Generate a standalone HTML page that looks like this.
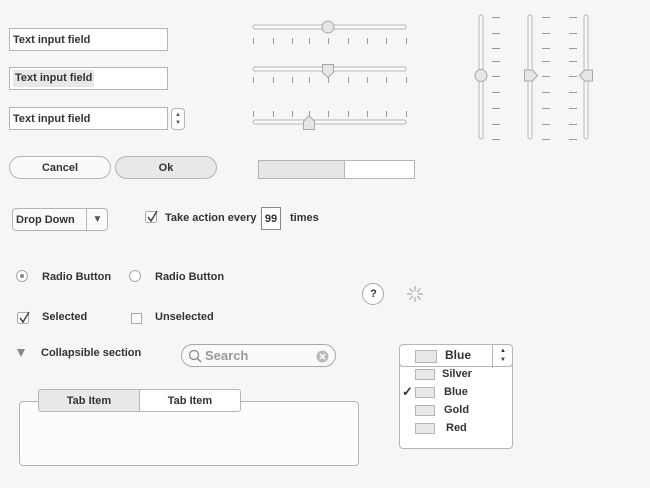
<!DOCTYPE html>
<html><head><style>
body{margin:0;width:650px;height:488px;background:#f6f6f6;font-family:"Liberation Sans",sans-serif;font-size:11px;font-weight:bold;color:#333;position:relative;overflow:hidden}
.a{position:absolute;box-sizing:border-box}
.inp{border:1px solid #b5b5b5;background:#fff;height:23px;line-height:21px;padding-left:3px;padding-top:1px}
.t{position:absolute;line-height:14px;white-space:nowrap}
.p1{padding-top:1px}
</style></head><body>
<div class="a inp" style="left:9px;top:28px;width:159px">Text input field</div>
<div class="a" style="left:9px;top:67px;width:159px;height:23px;border:1px solid #b5b5b5;background:#fff;padding:2px 0 0 3px"><span style="background:#e8e8e8;padding:0 2px;display:inline-block;line-height:17px">Text input field</span></div>
<div class="a inp" style="left:9px;top:107px;width:159px">Text input field</div>
<div class="a" style="left:171px;top:108px;width:14px;height:22px;border:1px solid #b5b5b5;border-radius:4px;background:#fff;font-size:6px;text-align:center;line-height:8px;padding-top:2px;color:#555">▲<br>▼</div>
<div class="a p1" style="left:9px;top:156px;width:102px;height:23px;border:1px solid #b5b5b5;border-radius:12px;background:#fafafa;text-align:center;line-height:21px">Cancel</div>
<div class="a p1" style="left:115px;top:156px;width:102px;height:23px;border:1px solid #b5b5b5;border-radius:12px;background:#e8e8e8;text-align:center;line-height:21px">Ok</div>

<svg class="a" style="left:0;top:0" width="650" height="488">
<g fill="#fafafa" stroke="#b5b5b5" stroke-width="1">
<rect x="253" y="25" width="153" height="4" rx="2"/>
<rect x="253" y="67" width="153" height="4" rx="2"/>
<rect x="253" y="120" width="153" height="4" rx="2"/>
<rect x="479" y="15" width="4" height="124" rx="2"/>
<rect x="528" y="15" width="4" height="124" rx="2"/>
<rect x="584" y="15" width="4" height="124" rx="2"/>
</g>
<g stroke="#999" stroke-width="1">
<path d="M253.5 38v6M273.5 38v6M292.5 38v6M309.5 38v6M328.5 38v6M348.5 38v6M367.5 38v6M386.5 38v6M406.5 38v6"/>
<path d="M253.5 77v6M273.5 77v6M292.5 77v6M309.5 77v6M328.5 77v6M348.5 77v6M367.5 77v6M386.5 77v6M406.5 77v6"/>
<path d="M253.5 111v6M273.5 111v6M292.5 111v6M309.5 111v6M328.5 111v6M348.5 111v6M367.5 111v6M386.5 111v6M406.5 111v6"/>
<path d="M492 17.5h8M492 33.5h8M492 48.5h8M492 61.5h8M492 76.5h8M492 92.5h8M492 108.5h8M492 124.5h8M492 139.5h8"/>
<path d="M542 17.5h8M542 33.5h8M542 48.5h8M542 61.5h8M542 76.5h8M542 92.5h8M542 108.5h8M542 124.5h8M542 139.5h8"/>
<path d="M569 17.5h8M569 33.5h8M569 48.5h8M569 61.5h8M569 76.5h8M569 92.5h8M569 108.5h8M569 124.5h8M569 139.5h8"/>
</g>
<g fill="#e6e6e6" stroke="#a8a8a8" stroke-width="1">
<circle cx="328" cy="27" r="6"/>
<path d="M322.5 64.5h11v8l-5.5 5l-5.5-5z"/>
<path d="M303.5 129.5h11v-8l-5.5-6l-5.5 6z"/>
<circle cx="481" cy="75.5" r="6"/>
<path d="M524.5 70h8l5 5.5l-5 5.5h-8z"/>
<path d="M592.5 70h-8l-5 5.5l5 5.5h8z"/>
</g>
<rect x="258.5" y="160.5" width="156" height="18" fill="#fff" stroke="#b5b5b5"/>
<rect x="259" y="161" width="85" height="17" fill="#e6e6e6"/>
<line x1="344.5" y1="161" x2="344.5" y2="178" stroke="#b5b5b5"/>
<circle cx="373" cy="294" r="10.5" fill="#fff" stroke="#a8a8a8"/>
<g stroke="#999" stroke-width="1.2" transform="translate(415 294)">
<path d="M0-3v-5M2.1-2.1l3.5-3.5M3 0h5M2.1 2.1l3.5 3.5M0 3v5M-2.1 2.1l-3.5 3.5M-3 0h-5M-2.1-2.1l-3.5-3.5" opacity=".8"/>
</g>
<circle cx="22" cy="276" r="5.5" fill="#fff" stroke="#a8a8a8"/><circle cx="22" cy="276" r="2" fill="#888"/>
<circle cx="135" cy="276" r="5.5" fill="#fff" stroke="#a8a8a8"/>
<rect x="17.5" y="312.5" width="11" height="11" rx="2" fill="#fff" stroke="#a8a8a8"/>
<path d="M20 318l3 4l6-10" fill="none" stroke="#444" stroke-width="1.5"/>
<rect x="131.5" y="313.5" width="10" height="10" fill="#fff" stroke="#a8a8a8"/>
<rect x="145.5" y="211.5" width="11" height="11" rx="2" fill="#fff" stroke="#a8a8a8"/>
<path d="M148 217l3 4l6-10" fill="none" stroke="#444" stroke-width="1.5"/>
<path d="M17 349h8l-4 8z" fill="#888"/>
</svg>

<div class="a p1" style="left:12px;top:208px;width:96px;height:23px;border:1px solid #b5b5b5;border-radius:4px;background:#fafafa;line-height:21px;padding-left:3px">Drop Down<span style="position:absolute;left:73px;top:0;height:21px;border-left:1px solid #b5b5b5;width:21px;text-align:center;font-size:10px;color:#555">▼</span></div>
<div class="t" style="left:165px;top:211px">Take action every</div>
<div class="a p1" style="left:261px;top:207px;width:20px;height:23px;border:1px solid #888;background:#fff;text-align:center;line-height:21px">99</div>
<div class="t" style="left:290px;top:211px">times</div>
<div class="t" style="left:42px;top:270px">Radio Button</div>
<div class="t" style="left:155px;top:270px">Radio Button</div>
<div class="t" style="left:42px;top:310px">Selected</div>
<div class="t" style="left:155px;top:310px">Unselected</div>
<div class="t" style="left:41px;top:346px">Collapsible section</div>
<div class="t" style="left:363px;top:287px;width:21px;text-align:center;font-size:11px">?</div>
<div class="a" style="left:181px;top:344px;width:155px;height:23px;border:1px solid #a8a8a8;border-radius:12px;background:#fafafa;color:#999;font-size:13px;line-height:21px;padding-left:23px">Search
<svg style="position:absolute;left:6px;top:4px" width="14" height="14"><circle cx="6" cy="6" r="4.5" fill="none" stroke="#888" stroke-width="1.3"/><path d="M9 9l4 4" stroke="#888" stroke-width="1.5"/></svg>
<svg style="position:absolute;right:6px;top:5px" width="13" height="13"><circle cx="6.5" cy="6.5" r="6" fill="#bbb"/><path d="M4 4l5 5M9 4l-5 5" stroke="#fff" stroke-width="1.5"/></svg></div>

<div class="a" style="left:399px;top:361px;width:114px;height:88px;border:1px solid #b5b5b5;border-radius:0 0 4px 4px;background:#fff"></div>
<div class="a" style="left:399px;top:344px;width:114px;height:23px;border:1px solid #b5b5b5;border-radius:4px;background:#fff;line-height:21px;padding-left:45px;font-size:12px">Blue<span style="position:absolute;left:92px;top:0;height:21px;border-left:1px solid #b5b5b5;width:20px;text-align:center;font-size:6px;line-height:9px;padding-top:2px">▲<br>▼</span><span style="position:absolute;left:15px;top:5px;width:20px;height:11px;border:1px solid #b5b5b5;background:#e8e8e8"></span></div>
<div class="a" style="left:415px;top:369px;width:20px;height:11px;border:1px solid #b5b5b5;background:#e8e8e8"></div>
<div class="a" style="left:415px;top:387px;width:20px;height:11px;border:1px solid #b5b5b5;background:#e8e8e8"></div>
<div class="a" style="left:415px;top:405px;width:20px;height:11px;border:1px solid #b5b5b5;background:#e8e8e8"></div>
<div class="a" style="left:415px;top:423px;width:20px;height:11px;border:1px solid #b5b5b5;background:#e8e8e8"></div>
<div class="t" style="left:442px;top:367px;font-size:11px">Silver</div>
<div class="t" style="left:402px;top:385px;font-size:13px">✓</div>
<div class="t" style="left:444px;top:385px;font-size:11px">Blue</div>
<div class="t" style="left:444px;top:403px;font-size:11px">Gold</div>
<div class="t" style="left:446px;top:421px;font-size:11px">Red</div>

<div class="a" style="left:19px;top:401px;width:340px;height:65px;border:1px solid #b5b5b5;border-radius:4px;background:#fcfcfd"></div>
<div class="a p1" style="left:38px;top:389px;width:102px;height:23px;border:1px solid #b5b5b5;border-radius:3px 0 0 3px;background:#e8e8e8;text-align:center;line-height:21px">Tab Item</div>
<div class="a p1" style="left:139px;top:389px;width:102px;height:23px;border:1px solid #b5b5b5;border-radius:0 3px 3px 0;background:#fff;text-align:center;line-height:21px">Tab Item</div>
</body></html>
